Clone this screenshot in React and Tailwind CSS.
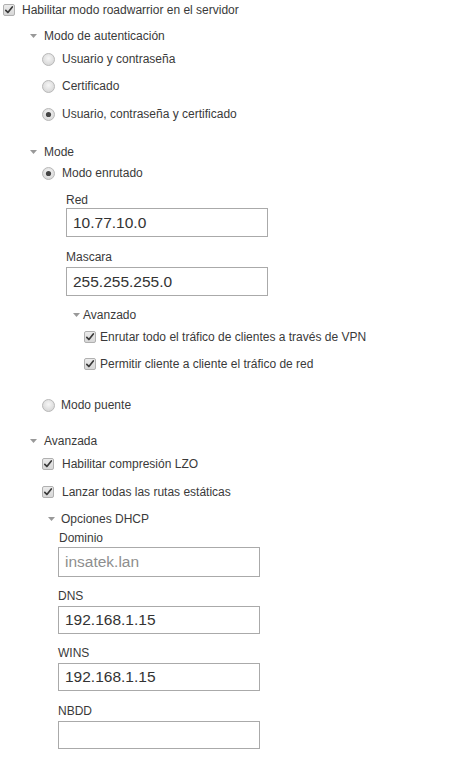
import React from "react";

const font = { fontFamily: '"Liberation Sans", Arial, sans-serif' };

function Check() {
  return (
    <svg width="12" height="12" viewBox="0 0 12 12" className="shrink-0">
      <defs>
        <linearGradient id="cbg" x1="0" y1="0" x2="0" y2="1">
          <stop offset="0" stopColor="#ececec" />
          <stop offset="1" stopColor="#d6d6d6" />
        </linearGradient>
      </defs>
      <rect x="0.5" y="0.5" width="11" height="11" rx="1.5" fill="url(#cbg)" stroke="#b0b0b0" />
      <path d="M2.8 6.3 L4.9 8.5 L9.3 3" fill="none" stroke="#3a3a3a" strokeWidth="1.7" strokeLinecap="round" strokeLinejoin="round" />
    </svg>
  );
}

function Radio({ on }) {
  return (
    <svg width="13" height="13" viewBox="0 0 13 13" className="shrink-0">
      <defs>
        <radialGradient id="rbg" cx="0.5" cy="0.4" r="0.6">
          <stop offset="0" stopColor="#f6f6f6" />
          <stop offset="1" stopColor="#d6d6d6" />
        </radialGradient>
      </defs>
      <circle cx="6.5" cy="6.5" r="6" fill="url(#rbg)" stroke="#b8b8b8" />
      {on && <circle cx="6.5" cy="6.5" r="2.6" fill="#444" />}
    </svg>
  );
}

function Tri() {
  return (
    <svg width="7" height="4" viewBox="0 0 7 4" className="shrink-0">
      <path d="M0 0 L7 0 L3.5 4 Z" fill="#999" />
    </svg>
  );
}

function Input({ value, placeholder, h }) {
  return (
    <div
      className={`w-[202px] ${h} border border-[#aaaaaa] bg-white flex items-center pl-[6px] text-[15.5px]`}
    >
      {value ? (
        <span className="text-[#333]">{value}</span>
      ) : (
        <span className="text-[#8e8e8e]">{placeholder}</span>
      )}
    </div>
  );
}

export default function App() {
  return (
    <div className="w-[474px] h-[758px] bg-white text-[12px] text-[#3a3a3a] overflow-hidden" style={font}>
      <div className="h-[20px] flex items-center pl-[3px]">
        <Check />
        <span className="ml-[7px]">Habilitar modo roadwarrior en el servidor</span>
      </div>

      <div className="mt-[6px] h-[20px] flex items-center pl-[30px]">
        <Tri />
        <span className="ml-[7px]">Modo de autenticación</span>
      </div>
      <div className="mt-[3px] h-[20px] flex items-center pl-[42px]">
        <Radio />
        <span className="ml-[7px]">Usuario y contraseña</span>
      </div>
      <div className="mt-[7px] h-[20px] flex items-center pl-[42px]">
        <Radio />
        <span className="ml-[7px]">Certificado</span>
      </div>
      <div className="mt-[8px] h-[20px] flex items-center pl-[42px]">
        <Radio on />
        <span className="ml-[7px]">Usuario, contraseña y certificado</span>
      </div>

      <div className="mt-[18px] h-[20px] flex items-center pl-[30px]">
        <Tri />
        <span className="ml-[7px]">Mode</span>
      </div>
      <div className="mt-[1px] h-[20px] flex items-center pl-[42px]">
        <Radio on />
        <span className="ml-[7px]">Modo enrutado</span>
      </div>

      <div className="pl-[66px]">
        <div className="mt-[9px] h-[16px] flex items-center">Red</div>
        <div>
          <Input value="10.77.10.0" h="h-[29px]" />
        </div>
        <div className="mt-[12px] h-[16px] flex items-center">Mascara</div>
        <div className="mt-[2px]">
          <Input value="255.255.255.0" h="h-[29px]" />
        </div>
      </div>

      <div className="mt-[9px] h-[20px] flex items-center pl-[73px]">
        <Tri />
        <span className="ml-[3px]">Avanzado</span>
      </div>
      <div className="mt-[2px] h-[20px] flex items-center pl-[84px]">
        <Check />
        <span className="ml-[4px]">Enrutar todo el tráfico de clientes a través de VPN</span>
      </div>
      <div className="mt-[7px] h-[20px] flex items-center pl-[84px]">
        <Check />
        <span className="ml-[4px]">Permitir cliente a cliente el tráfico de red</span>
      </div>

      <div className="mt-[21px] h-[20px] flex items-center pl-[42px]">
        <Radio />
        <span className="ml-[6px]">Modo puente</span>
      </div>

      <div className="mt-[16px] h-[20px] flex items-center pl-[30px]">
        <Tri />
        <span className="ml-[7px]">Avanzada</span>
      </div>
      <div className="mt-[3px] h-[20px] flex items-center pl-[42px]">
        <Check />
        <span className="ml-[8px]">Habilitar compresión LZO</span>
      </div>
      <div className="mt-[8px] h-[20px] flex items-center pl-[42px]">
        <Check />
        <span className="ml-[8px]">Lanzar todas las rutas estáticas</span>
      </div>
      <div className="mt-[7px] h-[20px] flex items-center pl-[48px]">
        <Tri />
        <span className="ml-[6px]">Opciones DHCP</span>
      </div>

      <div className="pl-[58px]">
        <div className="mt-[1px] h-[16px] flex items-center pl-[1px]">Dominio</div>
        <div className="mt-[1px]">
          <Input placeholder="insatek.lan" h="h-[30px]" />
        </div>
        <div className="mt-[11px] h-[16px] flex items-center">DNS</div>
        <div className="mt-[2px]">
          <Input value="192.168.1.15" h="h-[28px]" />
        </div>
        <div className="mt-[11px] h-[16px] flex items-center">WINS</div>
        <div className="mt-[2px]">
          <Input value="192.168.1.15" h="h-[28px]" />
        </div>
        <div className="mt-[12px] h-[16px] flex items-center">NBDD</div>
        <div className="mt-[2px]">
          <Input h="h-[28px]" />
        </div>
      </div>
    </div>
  );
}
